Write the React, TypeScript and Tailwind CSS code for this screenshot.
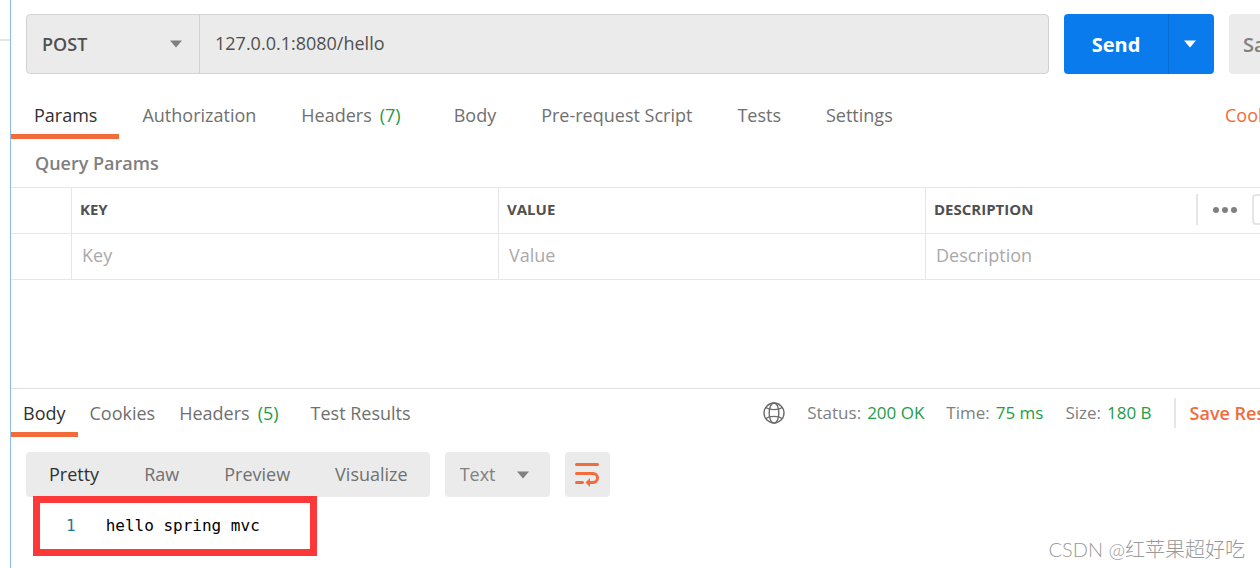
import { clsx } from 'clsx'

type Tab = {
  label: string
  count?: number
}

const requestTabs: Tab[] = [
  { label: 'Params' },
  { label: 'Authorization' },
  { label: 'Headers', count: 7 },
  { label: 'Body' },
  { label: 'Pre-request Script' },
  { label: 'Tests' },
  { label: 'Settings' },
]

const responseTabs: Tab[] = [
  { label: 'Body' },
  { label: 'Cookies' },
  { label: 'Headers', count: 5 },
  { label: 'Test Results' },
]

const viewModes = ['Pretty', 'Raw', 'Preview', 'Visualize']

const stats = [
  { label: 'Status:', value: '200 OK' },
  { label: 'Time:', value: '75 ms' },
  { label: 'Size:', value: '180 B' },
]

function Caret({ className }: { className?: string }) {
  return (
    <svg viewBox="0 0 12 8" className={clsx('h-2 w-3 shrink-0', className)} fill="currentColor" aria-hidden="true">
      <path d="M0 0.5h12L6 7.5z" />
    </svg>
  )
}

function GlobeIcon() {
  return (
    <svg viewBox="0 0 22 22" className="size-[22px]" fill="none" stroke="#6b6b6b" strokeWidth="1.4" aria-hidden="true">
      <circle cx="11" cy="11" r="10" />
      <path d="M11 1C8 1 6.2 5.500 6.200 11S8 21 11 21s4.800-4.500 4.800-10S14 1 11 1z" />
      <path d="M2.800 5.500C5 7 8 7.600 11 7.600s6-.6 8.200-2.100M2.800 16.500C5 15 8 14.400 11 14.400s6 .6 8.200 2.100" />
    </svg>
  )
}

function WrapIcon() {
  return (
    <svg viewBox="0 0 24 24" className="size-6" fill="none" stroke="#f26b3a" strokeWidth="3" strokeLinecap="round" aria-hidden="true">
      <path d="M1.500 1.500h21M1.500 10.500h16.500a4.500 4.500 0 0 1 0 9h-3M1.500 19.500H7.500" />
      <path d="M15 15v9l-4.500-4.500z" fill="#f26b3a" stroke="none" />
    </svg>
  )
}

function TabList({ tabs, label, wide }: { tabs: Tab[]; label: string; wide?: boolean }) {
  return (
    <div role="tablist" aria-label={label} className="flex">
      {tabs.map((tab, i) => (
        <button
          key={tab.label}
          type="button"
          role="tab"
          aria-selected={i === 0}
          className={clsx(
            'border-b-5 pt-3 pb-[7px] leading-6 whitespace-nowrap',
            wide ? 'pr-[22px] pl-[23px]' : 'px-3',
            i === 0 ? 'border-[#f26b3a] text-[#303030]' : 'border-transparent text-[#707070]',
            tab.count && 'mr-2',
          )}
        >
          {tab.label}
          {tab.count && <span className="ml-2 text-[#249c47]">({tab.count})</span>}
        </button>
      ))}
    </div>
  )
}

function UrlBar() {
  return (
    <form className="flex gap-[15px] px-[15px] pt-3.5">
      <div className="flex h-[60px] flex-1 rounded border border-[#d2d2d2] bg-[#ebebeb] text-[#505050]">
        <div className="relative w-[173px] shrink-0 border-r border-[#d2d2d2]">
          <select aria-label="Method" className="size-full appearance-none pl-[15px] font-semibold">
            <option>POST</option>
            <option>GET</option>
          </select>
          <Caret className="pointer-events-none absolute top-1/2 right-[17px] -translate-y-1/2 text-[#808080]" />
        </div>
        <input aria-label="Request URL" defaultValue="127.0.0.1:8080/hello" className="min-w-0 flex-1 px-[15px] pb-0.5 outline-none" />
      </div>
      <div className="flex w-[150px] shrink-0 rounded bg-[#097bed] text-white">
        <button type="button" className="flex-1 pt-0.5 text-[20px] font-bold">
          Send
        </button>
        <button type="button" aria-label="Send options" className="flex w-[46px] items-center border-l border-[#0a6fd4] pl-[15px]">
          <Caret />
        </button>
      </div>
      <button type="button" className="flex w-[108px] shrink-0 items-center gap-4 rounded bg-[#ebebeb] pt-0.5 pl-3.5 text-[20px] font-semibold text-[#808080]">
        Save
        <Caret />
      </button>
    </form>
  )
}

function ParamsTable() {
  const cell = 'h-[46px] border-b border-[#e6e6e6] p-0'
  const divided = 'h-[46px] border-b border-l border-[#e6e6e6] p-0'
  return (
    <table className="w-full table-fixed border-separate border-spacing-0 border-t border-[#e6e6e6] text-left">
      <thead className="text-[15px] text-[#505050]">
        <tr>
          <th className={clsx(cell, 'w-[60px]')} />
          <th className={clsx(divided, 'pb-0.5 pl-2 font-bold')}>KEY</th>
          <th className={clsx(divided, 'pb-0.5 pl-2 font-bold')}>VALUE</th>
          <th className={clsx(divided, 'pb-0.5 pl-2 font-bold')}>
            <div className="flex items-center">
              DESCRIPTION
              <div className="ml-auto flex h-[31px] items-center border-l-2 border-[#e6e6e6] pl-[15px]">
                <button type="button" aria-label="Columns" className="text-[#808080]">
                  <svg viewBox="0 0 24 6" className="h-1.5 w-6" fill="currentColor" aria-hidden="true">
                    <circle cx="3" cy="3" r="3" />
                    <circle cx="12" cy="3" r="3" />
                    <circle cx="21" cy="3" r="3" />
                  </svg>
                </button>
                <button type="button" className="ml-[15px] h-[31px] w-[100px] rounded border-2 border-[#e6e6e6] pl-2 font-normal">
                  Bulk Edit
                </button>
              </div>
            </div>
          </th>
        </tr>
      </thead>
      <tbody>
        <tr>
          <td className={cell} />
          {['Key', 'Value', 'Description'].map((name) => (
            <td key={name} className={divided}>
              <input aria-label={name} placeholder={name} className="h-full w-full pb-1 pl-2.5 outline-none placeholder:text-[#a9a9a9]" />
            </td>
          ))}
        </tr>
      </tbody>
    </table>
  )
}

function ResponseHeader() {
  return (
    <div className="flex items-center border-t border-[#e0e0e0]">
      <TabList tabs={responseTabs} label="Response" />
      <div className="ml-auto flex items-center pr-3.5 whitespace-nowrap">
        <GlobeIcon />
        <dl className="flex text-[17px] text-[#808080]">
          {stats.map((stat) => (
            <div key={stat.label} className="ml-[22px] flex gap-1.5">
              <dt>{stat.label}</dt>
              <dd className="text-[#249c47]">{stat.value}</dd>
            </div>
          ))}
        </dl>
        <button type="button" className="ml-[22px] flex h-[30px] items-center gap-2 border-l-2 border-[#e6e6e6] pl-3.5 font-semibold text-[#f26b3a]">
          Save Response
          <Caret />
        </button>
      </div>
    </div>
  )
}

function ResponseBody() {
  return (
    <>
      <div className="flex h-[45px] gap-[15px] px-[15px]">
        <div className="flex rounded bg-[#ebebeb]">
          {viewModes.map((mode, i) => (
            <button key={mode} type="button" className={clsx('pr-[22px] pl-[23px]', i === 0 ? 'text-[#303030]' : 'text-[#707070]')}>
              {mode}
            </button>
          ))}
        </div>
        <div className="relative w-[105px] text-[#808080]">
          <select aria-label="Format" className="size-full appearance-none rounded bg-[#ebebeb] pl-[15px]">
            <option>Text</option>
            <option>JSON</option>
          </select>
          <Caret className="pointer-events-none absolute top-1/2 right-[21px] -translate-y-1/2" />
        </div>
        <button type="button" aria-label="Wrap lines" className="flex w-[45px] items-center justify-center rounded bg-[#ebebeb]">
          <WrapIcon />
        </button>
      </div>
      <pre className="relative -mt-px ml-[22px] flex h-[60px] w-[284px] items-center gap-[30px] border-7 border-[#fc3838] bg-white pl-[26px] font-['DejaVu_Sans_Mono',monospace] text-[16px] text-black">
        <span className="text-[#237893]">1</span>
        <code className="font-[inherit]">hello spring mvc</code>
      </pre>
    </>
  )
}

export default function App() {
  return (
    <div className="relative flex min-h-screen overflow-hidden bg-white font-['Open_Sans',sans-serif] text-[18px]">
      <div className="w-2.5 shrink-0">
        <div className="h-[41px] border-b-2 border-[#e6e6e6]" />
      </div>
      {/* the panel runs past the right edge of the window */}
      <main className="-mr-[92px] min-w-0 flex-1 border-l border-[#8bbbe8] pb-3">
        <UrlBar />
        <div className="flex pt-[17px]">
          <TabList tabs={requestTabs} label="Request" wide />
          <div className="ml-auto flex items-center gap-[18px] text-[#f26b3a]">
            <a href="#cookies">Cookies</a>
            <a href="#code">Code</a>
          </div>
        </div>
        <h2 className="py-3 pl-6 leading-6 font-semibold text-[#808080]">Query Params</h2>
        <ParamsTable />
        <div className="h-27" />
        <ResponseHeader />
        <div className="h-[15px]" />
        <ResponseBody />
      </main>
      <p className="absolute right-[15px] bottom-1 font-['Lato','Noto_Sans_CJK_SC',sans-serif] text-[20px] font-light text-[#999999]">
        CSDN @红苹果超好吃
      </p>
    </div>
  )
}
